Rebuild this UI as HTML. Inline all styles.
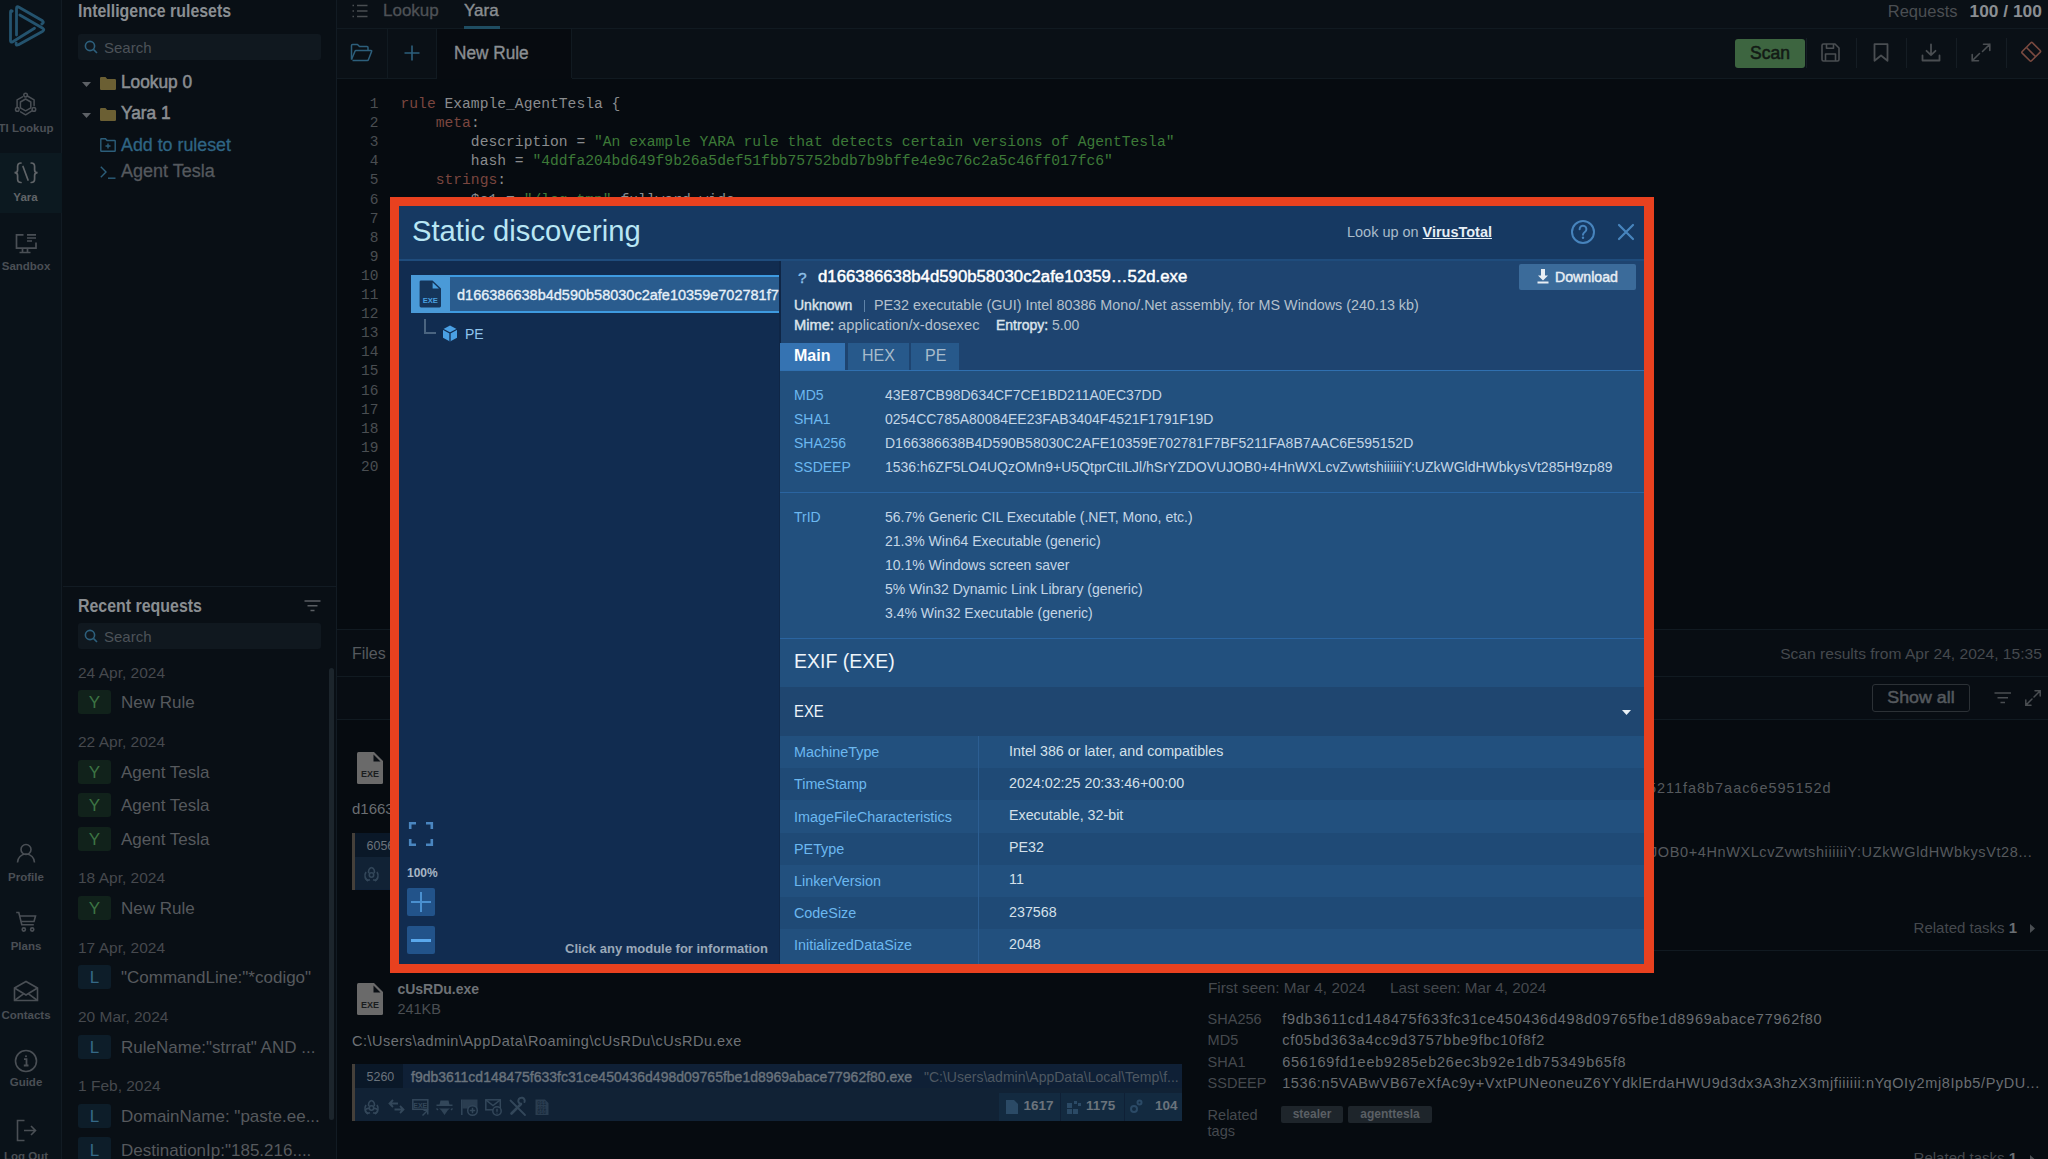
<!DOCTYPE html>
<html><head><meta charset="utf-8">
<style>
*{margin:0;padding:0;box-sizing:border-box}
html,body{width:2048px;height:1159px;overflow:hidden;background:#060b10;font-family:"Liberation Sans",sans-serif}
.a{position:absolute}
.t{position:absolute;white-space:nowrap}
svg{position:absolute;overflow:visible}
.nl{position:absolute;left:0;width:62px;text-align:center;font-size:12px;color:#6a6f74;font-weight:bold;line-height:14px}
.srch{position:absolute;left:15px;width:243px;height:26px;background:#111922;border-radius:3px}
.srch span{position:absolute;left:26px;top:5px;font-size:14px;color:#52585e}
.dt{position:absolute;left:15px;font-size:14px;color:#5c6166;line-height:16px}
.bd{position:absolute;left:15px;width:32px;height:24px;border-radius:3px;font-size:16px;line-height:24px;text-align:center}
.bY{background:#0f2017;color:#3e7a45}
.bL{background:#0d1d29;color:#3b6b89}
.it{position:absolute;left:58px;font-size:17px;color:#6a6f74;line-height:20px}
.code{position:absolute;left:400px;font-family:"Liberation Mono",monospace;font-size:15px;line-height:19px;color:#8f9498;white-space:pre}
.ln{position:absolute;left:340px;width:38px;text-align:right;font-family:"Liberation Mono",monospace;font-size:14px;color:#4b5055;line-height:19px}
.kw{color:#7d4337}
.st{color:#3f7a3a}
.hk{left:14px;font-size:14px;line-height:16px;color:#6cb8f0}
.hv{left:105px;font-size:14px;line-height:16px;color:#c4d6e6}
.tk{left:14px;font-size:14px;line-height:18px;color:#6cb8f0}
.tv{left:229px;font-size:14px;line-height:18px;color:#d4e0ea}
</style></head>
<body>

<div class="a" style="left:0px;top:0px;width:62px;height:1159px;background:#0a1219;"></div>
<div class="a" style="left:61px;top:0px;width:1px;height:1159px;background:#121b23;"></div>
<svg style="left:0;top:0" width="62" height="62" viewBox="0 0 62 62" fill="none" stroke="#24536e" stroke-width="2.8" stroke-linecap="round" stroke-linejoin="round"><path d="M12.2 11.2Q10.5 9.8 10.5 12.2V40.5Q10.5 43 12.8 41.8L34.5 28.2"/><path d="M16.5 35V8.5Q16.5 5.8 19 7.2L42.5 20.8Q44.5 22.3 41.8 24"/><path d="M19.8 15L42.8 28.3Q44.8 29.8 42.8 31.2L18.5 44.8Q15.5 46 16.2 43.2"/></svg>
<div class="a" style="left:0px;top:153px;width:62px;height:60px;background:#0c1920;"></div>
<svg style="left:0;top:85px" width="62" height="40" viewBox="0 85 62 40" fill="none" stroke="#4a4f55" stroke-width="1.5" stroke-linecap="round" stroke-linejoin="round"><path d="M25.6 99L30.8 102V107.8L25.6 110.8L20.4 107.8V102Z"/><path d="M27.4 96L34.1 99.9V105.6"/><path d="M32.3 110.6L25.6 114.8L20.6 111.9"/><path d="M17.1 107.4V99.9L22.5 96.9"/><circle cx="25.6" cy="95.1" r="1.8"/><circle cx="17.3" cy="109.4" r="1.8"/><circle cx="33.9" cy="109.4" r="1.8"/></svg>
<div class="t" style="left:-124px;width:300px;text-align:center;top:121.02px;font-size:11.5px;line-height:15px;color:#4a4f55;font-weight:bold">TI Lookup</div>
<svg style="left:0;top:150px" width="62" height="40" viewBox="0 150 62 40" fill="none" stroke="#606468" stroke-width="1.7" stroke-linecap="round"><path d="M21 163Q17.6 163 17.6 166.5V170Q17.6 172.7 14.5 172.7Q17.6 172.7 17.6 175.4V179Q17.6 182.5 21 182.5"/><path d="M31.2 163Q34.6 163 34.6 166.5V170Q34.6 172.7 37.6 172.7Q34.6 172.7 34.6 175.4V179Q34.6 182.5 31.2 182.5"/><path d="M23 166.5L28 180"/></svg>
<div class="t" style="left:-124.5px;width:300px;text-align:center;top:189.92px;font-size:11.5px;line-height:15px;color:#606468;font-weight:bold">Yara</div>
<svg style="left:14px;top:232px" width="24" height="24" viewBox="0 0 24 24" fill="none" stroke="#4a4f55" stroke-width="1.7"><path d="M9.5 2.8H2.5V16.2H22V10.5"/><path d="M13 2.8H22M13 6H22M13 9H18"/><path d="M8.5 16.2V20.5M13.5 16.2V20.5M5.5 20.5H16.5"/></svg>
<div class="t" style="left:-124px;width:300px;text-align:center;top:259.02px;font-size:11.5px;line-height:15px;color:#4a4f55;font-weight:bold">Sandbox</div>
<svg style="left:14px;top:840px" width="24" height="24" viewBox="0 0 24 24" fill="none" stroke="#4a4f55" stroke-width="1.6"><circle cx="12" cy="9.5" r="5"/><path d="M3.5 22.5A8.5 8.5 0 0 1 20.5 22.5"/></svg>
<div class="t" style="left:-124px;width:300px;text-align:center;top:869.52px;font-size:11.5px;line-height:15px;color:#4a4f55;font-weight:bold">Profile</div>
<svg style="left:14px;top:910px" width="24" height="24" viewBox="0 0 24 24" fill="none" stroke="#4a4f55" stroke-width="1.6"><path d="M2.2 2.5H4.8L7.8 14.8H19.8"/><path d="M5.5 6H21.5L20 11.5H7.2"/><circle cx="9.8" cy="19.5" r="1.6"/><circle cx="18.2" cy="19.5" r="1.6"/></svg>
<div class="t" style="left:-124px;width:300px;text-align:center;top:938.52px;font-size:11.5px;line-height:15px;color:#4a4f55;font-weight:bold">Plans</div>
<svg style="left:13px;top:979px" width="26" height="24" viewBox="0 0 26 24" fill="none" stroke="#4a4f55" stroke-width="1.6"><path d="M1.5 9L13 2.5L24.5 9V21.5H1.5Z"/><path d="M1.5 9L13 16L24.5 9M1.5 21.5L10.5 14.8M24.5 21.5L15.5 14.8"/></svg>
<div class="t" style="left:-124px;width:300px;text-align:center;top:1008.02px;font-size:11.5px;line-height:15px;color:#4a4f55;font-weight:bold">Contacts</div>
<svg style="left:14px;top:1049px" width="24" height="24" viewBox="0 0 24 24" fill="none" stroke="#4a4f55" stroke-width="1.6"><circle cx="12" cy="12" r="10.5"/><path d="M10 10.2H12.5V16.5M9.8 16.5H14.5" stroke-width="1.8"/><circle cx="12" cy="7.2" r="1" fill="#4a4f55" stroke="none"/></svg>
<div class="t" style="left:-124px;width:300px;text-align:center;top:1074.52px;font-size:11.5px;line-height:15px;color:#4a4f55;font-weight:bold">Guide</div>
<svg style="left:14px;top:1118px" width="24" height="24" viewBox="0 0 24 24" fill="none" stroke="#4a4f55" stroke-width="1.6"><path d="M10.5 2.5H3.5V22.5H10.5"/><path d="M10 12.5H21.5M17 8L21.5 12.5L17 17"/></svg>
<div class="t" style="left:-124px;width:300px;text-align:center;top:1148.52px;font-size:11.5px;line-height:15px;color:#4a4f55;font-weight:bold">Log Out</div>
<div class="a" style="left:62px;top:0px;width:274px;height:1159px;background:#090f15;"></div>
<div class="a" style="left:336px;top:0px;width:1px;height:1159px;background:#121b23;"></div>
<div class="t" id="s_ir" style="left:78px;top:0.44px;font-size:17.5px;line-height:22px;color:#8a8e92;font-weight:bold;transform:scaleX(0.91);transform-origin:left">Intelligence rulesets</div>
<div class="a" style="left:78px;top:34px;width:243px;height:26px;background:#10181f;border-radius:3px"></div>
<svg style="left:84px;top:40px" width="14" height="14" viewBox="0 0 14 14" fill="none" stroke="#2d5f7c" stroke-width="1.6"><circle cx="6" cy="6" r="4.6"/><path d="M9.4 9.4L13 13"/></svg>
<div class="t" style="left:104px;top:38.05px;font-size:15px;line-height:19px;color:#4c5258;">Search</div>
<svg style="left:82px;top:81.75px" width="9" height="5" viewBox="0 0 9 5"><path d="M0 0H9L4.5 5Z" fill="#5d6166"/></svg>
<svg style="left:100px;top:76.75px" width="16" height="13" viewBox="0 0 16 13"><path d="M0 1.2Q0 0 1.2 0H5.5L7.2 2H14.8Q16 2 16 3.2V11.8Q16 13 14.8 13H1.2Q0 13 0 11.8Z" fill="#6b5f33"/></svg>
<div class="t" id="tree_Look" style="left:121px;top:71.01px;font-size:18px;line-height:23px;color:#8a8e92;-webkit-text-stroke:0.55px #8a8e92;transform:scaleX(0.96);transform-origin:left">Lookup 0</div>
<svg style="left:82px;top:113px" width="9" height="5" viewBox="0 0 9 5"><path d="M0 0H9L4.5 5Z" fill="#5d6166"/></svg>
<svg style="left:100px;top:108px" width="16" height="13" viewBox="0 0 16 13"><path d="M0 1.2Q0 0 1.2 0H5.5L7.2 2H14.8Q16 2 16 3.2V11.8Q16 13 14.8 13H1.2Q0 13 0 11.8Z" fill="#6b5f33"/></svg>
<div class="t" id="tree_Yara" style="left:121px;top:102.26px;font-size:18px;line-height:23px;color:#8a8e92;-webkit-text-stroke:0.55px #8a8e92;transform:scaleX(0.96);transform-origin:left">Yara 1</div>
<svg style="left:100px;top:138px" width="16" height="14" viewBox="0 0 16 14" fill="none" stroke="#2c5e7a" stroke-width="1.4"><path d="M0.8 1.2Q0.8 0.7 1.3 0.7H5.5L7 2.5H14.7Q15.2 2.5 15.2 3V12.8Q15.2 13.3 14.7 13.3H1.3Q0.8 13.3 0.8 12.8Z"/><path d="M8 5.5V10.5M5.5 8H10.5"/></svg>
<div class="t" id="s_add" style="left:121px;top:133.51px;font-size:18px;line-height:23px;color:#2f6584;-webkit-text-stroke:0.3px #2f6584;transform:scaleX(0.99);transform-origin:left">Add to ruleset</div>
<svg style="left:100px;top:166px" width="16" height="13" viewBox="0 0 16 13" fill="none" stroke="#2c5e7a" stroke-width="1.4"><path d="M0.8 0.8L6 6L0.8 11.2"/><path d="M8 12.2H15.5"/></svg>
<div class="t" id="s_at" style="left:121px;top:159.76px;font-size:18px;line-height:23px;color:#55595e;-webkit-text-stroke:0.3px #55595e">Agent Tesla</div>
<div class="a" style="left:63px;top:586px;width:273px;height:1px;background:#121b23;"></div>
<div class="t" id="s_rr" style="left:78px;top:594.69px;font-size:17.5px;line-height:22px;color:#8a8e92;font-weight:bold;transform:scaleX(0.91);transform-origin:left">Recent requests</div>
<svg style="left:304px;top:600px" width="17" height="12" viewBox="0 0 17 12" fill="none" stroke="#5a5e63" stroke-width="1.5"><path d="M0.5 1H16.5M3.5 5.8H13.5M6.5 10.5H10.5"/></svg>
<div class="a" style="left:78px;top:623px;width:243px;height:26px;background:#10181f;border-radius:3px"></div>
<svg style="left:84px;top:629px" width="14" height="14" viewBox="0 0 14 14" fill="none" stroke="#2d5f7c" stroke-width="1.6"><circle cx="6" cy="6" r="4.6"/><path d="M9.4 9.4L13 13"/></svg>
<div class="t" style="left:104px;top:627.05px;font-size:15px;line-height:19px;color:#4c5258;">Search</div>
<div class="a" style="left:329px;top:668px;width:5px;height:452px;background:#1c252c;border-radius:2.5px"></div>
<div class="t" style="left:78px;top:662.88px;font-size:15.5px;line-height:20px;color:#46494e;">24 Apr, 2024</div>
<div class="a" style="left:78px;top:690px;width:33px;height:24px;background:#11221b;border-radius:3px"></div>
<div class="t" style="left:-55.5px;width:300px;text-align:center;top:692.11px;font-size:17px;line-height:22px;color:#3c7443;">Y</div>
<div class="t" style="left:121px;top:692.11px;font-size:17px;line-height:22px;color:#56595d;">New Rule</div>
<div class="t" style="left:78px;top:732.13px;font-size:15.5px;line-height:20px;color:#46494e;">22 Apr, 2024</div>
<div class="a" style="left:78px;top:759.5px;width:33px;height:24px;background:#11221b;border-radius:3px"></div>
<div class="t" style="left:-55.5px;width:300px;text-align:center;top:761.61px;font-size:17px;line-height:22px;color:#3c7443;">Y</div>
<div class="t" style="left:121px;top:761.61px;font-size:17px;line-height:22px;color:#56595d;">Agent Tesla</div>
<div class="a" style="left:78px;top:793.25px;width:33px;height:24px;background:#11221b;border-radius:3px"></div>
<div class="t" style="left:-55.5px;width:300px;text-align:center;top:795.36px;font-size:17px;line-height:22px;color:#3c7443;">Y</div>
<div class="t" style="left:121px;top:795.36px;font-size:17px;line-height:22px;color:#56595d;">Agent Tesla</div>
<div class="a" style="left:78px;top:826.5px;width:33px;height:24px;background:#11221b;border-radius:3px"></div>
<div class="t" style="left:-55.5px;width:300px;text-align:center;top:828.61px;font-size:17px;line-height:22px;color:#3c7443;">Y</div>
<div class="t" style="left:121px;top:828.61px;font-size:17px;line-height:22px;color:#56595d;">Agent Tesla</div>
<div class="t" style="left:78px;top:867.83px;font-size:15.5px;line-height:20px;color:#46494e;">18 Apr, 2024</div>
<div class="a" style="left:78px;top:896.2px;width:33px;height:24px;background:#11221b;border-radius:3px"></div>
<div class="t" style="left:-55.5px;width:300px;text-align:center;top:898.31px;font-size:17px;line-height:22px;color:#3c7443;">Y</div>
<div class="t" style="left:121px;top:898.31px;font-size:17px;line-height:22px;color:#56595d;">New Rule</div>
<div class="t" style="left:78px;top:937.53px;font-size:15.5px;line-height:20px;color:#46494e;">17 Apr, 2024</div>
<div class="a" style="left:78px;top:965.3px;width:33px;height:24px;background:#0d1d29;border-radius:3px"></div>
<div class="t" style="left:-55.5px;width:300px;text-align:center;top:967.41px;font-size:17px;line-height:22px;color:#356987;">L</div>
<div class="t" style="left:121px;top:967.41px;font-size:17px;line-height:22px;color:#56595d;">"CommandLine:"*codigo"</div>
<div class="t" style="left:78px;top:1006.63px;font-size:15.5px;line-height:20px;color:#46494e;">20 Mar, 2024</div>
<div class="a" style="left:78px;top:1034.5px;width:33px;height:24px;background:#0d1d29;border-radius:3px"></div>
<div class="t" style="left:-55.5px;width:300px;text-align:center;top:1036.61px;font-size:17px;line-height:22px;color:#356987;">L</div>
<div class="t" style="left:121px;top:1036.61px;font-size:17px;line-height:22px;color:#56595d;">RuleName:"strrat" AND ...</div>
<div class="t" style="left:78px;top:1076.03px;font-size:15.5px;line-height:20px;color:#46494e;">1 Feb, 2024</div>
<div class="a" style="left:78px;top:1103.9px;width:33px;height:24px;background:#0d1d29;border-radius:3px"></div>
<div class="t" style="left:-55.5px;width:300px;text-align:center;top:1106.01px;font-size:17px;line-height:22px;color:#356987;">L</div>
<div class="t" style="left:121px;top:1106.01px;font-size:17px;line-height:22px;color:#56595d;">DomainName: "paste.ee...</div>
<div class="a" style="left:78px;top:1137.4px;width:33px;height:24px;background:#0d1d29;border-radius:3px"></div>
<div class="t" style="left:-55.5px;width:300px;text-align:center;top:1139.51px;font-size:17px;line-height:22px;color:#356987;">L</div>
<div class="t" style="left:121px;top:1139.51px;font-size:17px;line-height:22px;color:#56595d;">DestinationIp:"185.216....</div>
<div class="a" style="left:337px;top:0px;width:1711px;height:78px;background:#0a1016;"></div>
<div class="a" style="left:337px;top:28px;width:1711px;height:1px;background:#111a21;"></div>
<svg style="left:352px;top:4px" width="16" height="14" viewBox="0 0 16 14" fill="none" stroke="#4a4e52" stroke-width="1.4"><path d="M5 1.5H15.5M5 7H15.5M5 12.5H15.5"/><path d="M0.5 1.5H2M0.5 7H2M0.5 12.5H2"/></svg>
<div class="t" id="m_lookup" style="left:383px;top:0.31px;font-size:17px;line-height:22px;color:#4e5257;-webkit-text-stroke:0.3px #4e5257">Lookup</div>
<div class="t" id="m_yara" style="left:464px;top:0.31px;font-size:17px;line-height:22px;color:#8a8e92;-webkit-text-stroke:0.4px #8a8e92">Yara</div>
<div class="a" style="left:464px;top:26px;width:36px;height:3px;background:#1f4d62;"></div>
<div class="t" id="m_req" style="right:90.5px;top:0.58px;font-size:16.5px;line-height:21px;color:#4a4e52;">Requests</div>
<div class="t" id="m_100" style="right:6px;top:0.58px;font-size:16.5px;line-height:21px;color:#8a8e92;font-weight:bold;transform:scaleX(1.05);transform-origin:right">100 / 100</div>
<div class="a" style="left:337px;top:78px;width:100px;height:1px;background:#111a21;"></div>
<div class="a" style="left:572px;top:78px;width:1476px;height:1px;background:#111a21;"></div>
<div class="a" style="left:387px;top:29px;width:1px;height:49px;background:#111a21;"></div>
<div class="a" style="left:436px;top:29px;width:1px;height:49px;background:#111a21;"></div>
<div class="a" style="left:571px;top:29px;width:1px;height:49px;background:#111a21;"></div>
<div class="a" style="left:437px;top:29px;width:134px;height:50px;background:#070b10;"></div>
<svg style="left:350px;top:43px" width="23" height="19" viewBox="0 0 23 19" fill="none" stroke="#2d5f7c" stroke-width="1.5" stroke-linejoin="round"><path d="M1.5 16.5V2.5Q1.5 1.5 2.5 1.5H7.5L9.5 3.5H17Q18 3.5 18 4.5V7"/><path d="M1.5 16.5L5 8.2Q5.3 7.5 6 7.5H21Q22 7.5 21.6 8.4L18.5 16.5Q18.2 17.5 17.3 17.5H2.5"/></svg>
<svg style="left:404px;top:45px" width="16" height="16" viewBox="0 0 16 16" fill="none" stroke="#2d5f7c" stroke-width="1.6"><path d="M8 0.5V15.5M0.5 8H15.5"/></svg>
<div class="t" id="m_newrule" style="left:454.4px;top:41.56px;font-size:18px;line-height:23px;color:#8a8e92;-webkit-text-stroke:0.4px #8a8e92;transform:scaleX(0.956);transform-origin:left">New Rule</div>
<div class="a" style="left:1735px;top:39px;width:70px;height:29px;background:#3d6540;border-radius:3px"></div>
<div class="t" id="m_scan" style="left:1620px;width:300px;text-align:center;top:41.94px;font-size:17.5px;line-height:22px;color:#131a15;-webkit-text-stroke:0.55px #131a15">Scan</div>
<div class="a" style="left:1806px;top:38px;width:1px;height:30px;background:#151d24;"></div>
<div class="a" style="left:1856px;top:38px;width:1px;height:30px;background:#151d24;"></div>
<div class="a" style="left:1906px;top:38px;width:1px;height:30px;background:#151d24;"></div>
<div class="a" style="left:1956px;top:38px;width:1px;height:30px;background:#151d24;"></div>
<div class="a" style="left:2006px;top:38px;width:1px;height:30px;background:#151d24;"></div>
<svg style="left:1821px;top:43px" width="19" height="19" viewBox="0 0 19 19" fill="none" stroke="#4a4e52" stroke-width="1.6" stroke-linejoin="round"><path d="M2.5 1H14L18 5V16.5Q18 18 16.5 18H2.5Q1 18 1 16.5V2.5Q1 1 2.5 1Z"/><path d="M5.5 1V5.2H12.5V1M4.5 18V11H14.5V18"/></svg>
<svg style="left:1873px;top:43px" width="16" height="19" viewBox="0 0 16 19" fill="none" stroke="#4a4e52" stroke-width="1.8" stroke-linejoin="round"><path d="M1.5 1.2H14.5V17.8L8 12.5L1.5 17.8Z"/></svg>
<svg style="left:1921px;top:43px" width="20" height="19" viewBox="0 0 20 19" fill="none" stroke="#4a4e52" stroke-width="1.8" stroke-linecap="round" stroke-linejoin="round"><path d="M10 1.5V12M5.5 7.8L10 12.2L14.5 7.8"/><path d="M1.5 12.5V17.5H18.5V12.5"/></svg>
<svg style="left:1971px;top:43px" width="20" height="19" viewBox="0 0 20 19" fill="none" stroke="#4a4e52" stroke-width="1.6" stroke-linecap="round"><path d="M12.5 1.2H18.8V7.5M18.8 1.2L11.5 8.5M7.5 17.8H1.2V11.5M1.2 17.8L8.5 10.5"/></svg>
<svg style="left:2020px;top:41px" width="22" height="22" viewBox="0 0 22 22" fill="none" stroke="#7a4a40" stroke-width="1.6" stroke-linejoin="round"><path d="M12.5 1.8L20.2 9.5Q21 10.3 20.2 11.1L11.5 19.8Q10.7 20.6 9.9 19.8L2.2 12.1Q1.4 11.3 2.2 10.5L10.9 1.8Q11.7 1 12.5 1.8Z"/><path d="M6.5 6.5L15.5 15.5"/></svg>
<div class="t" style="right:1669.5px;top:95.08px;font-size:14.5px;line-height:19px;color:#4a4e52;font-family:'Liberation Mono',monospace">1</div>
<div class="t" style="right:1669.5px;top:114.18px;font-size:14.5px;line-height:19px;color:#4a4e52;font-family:'Liberation Mono',monospace">2</div>
<div class="t" style="right:1669.5px;top:133.28px;font-size:14.5px;line-height:19px;color:#4a4e52;font-family:'Liberation Mono',monospace">3</div>
<div class="t" style="right:1669.5px;top:152.38px;font-size:14.5px;line-height:19px;color:#4a4e52;font-family:'Liberation Mono',monospace">4</div>
<div class="t" style="right:1669.5px;top:171.48px;font-size:14.5px;line-height:19px;color:#4a4e52;font-family:'Liberation Mono',monospace">5</div>
<div class="t" style="right:1669.5px;top:190.58px;font-size:14.5px;line-height:19px;color:#4a4e52;font-family:'Liberation Mono',monospace">6</div>
<div class="t" style="right:1669.5px;top:209.68px;font-size:14.5px;line-height:19px;color:#4a4e52;font-family:'Liberation Mono',monospace">7</div>
<div class="t" style="right:1669.5px;top:228.78px;font-size:14.5px;line-height:19px;color:#4a4e52;font-family:'Liberation Mono',monospace">8</div>
<div class="t" style="right:1669.5px;top:247.88px;font-size:14.5px;line-height:19px;color:#4a4e52;font-family:'Liberation Mono',monospace">9</div>
<div class="t" style="right:1669.5px;top:266.98px;font-size:14.5px;line-height:19px;color:#4a4e52;font-family:'Liberation Mono',monospace">10</div>
<div class="t" style="right:1669.5px;top:286.08px;font-size:14.5px;line-height:19px;color:#4a4e52;font-family:'Liberation Mono',monospace">11</div>
<div class="t" style="right:1669.5px;top:305.18px;font-size:14.5px;line-height:19px;color:#4a4e52;font-family:'Liberation Mono',monospace">12</div>
<div class="t" style="right:1669.5px;top:324.28px;font-size:14.5px;line-height:19px;color:#4a4e52;font-family:'Liberation Mono',monospace">13</div>
<div class="t" style="right:1669.5px;top:343.38px;font-size:14.5px;line-height:19px;color:#4a4e52;font-family:'Liberation Mono',monospace">14</div>
<div class="t" style="right:1669.5px;top:362.48px;font-size:14.5px;line-height:19px;color:#4a4e52;font-family:'Liberation Mono',monospace">15</div>
<div class="t" style="right:1669.5px;top:381.58px;font-size:14.5px;line-height:19px;color:#4a4e52;font-family:'Liberation Mono',monospace">16</div>
<div class="t" style="right:1669.5px;top:400.68px;font-size:14.5px;line-height:19px;color:#4a4e52;font-family:'Liberation Mono',monospace">17</div>
<div class="t" style="right:1669.5px;top:419.78px;font-size:14.5px;line-height:19px;color:#4a4e52;font-family:'Liberation Mono',monospace">18</div>
<div class="t" style="right:1669.5px;top:438.88px;font-size:14.5px;line-height:19px;color:#4a4e52;font-family:'Liberation Mono',monospace">19</div>
<div class="t" style="right:1669.5px;top:457.98px;font-size:14.5px;line-height:19px;color:#4a4e52;font-family:'Liberation Mono',monospace">20</div>
<div class="t" style="left:400.5px;top:95.02px;font-size:14.67px;line-height:19px;color:#8a8c8e;font-family:'Liberation Mono',monospace;white-space:pre"><span style="color:#7a463f">rule</span> Example_AgentTesla {</div>
<div class="t" style="left:400.5px;top:114.12px;font-size:14.67px;line-height:19px;color:#8a8c8e;font-family:'Liberation Mono',monospace;white-space:pre">    <span style="color:#7a463f">meta</span>:</div>
<div class="t" style="left:400.5px;top:133.22px;font-size:14.67px;line-height:19px;color:#8a8c8e;font-family:'Liberation Mono',monospace;white-space:pre">        description = <span style="color:#3d7a38">"An example YARA rule that detects certain versions of AgentTesla"</span></div>
<div class="t" style="left:400.5px;top:152.32px;font-size:14.67px;line-height:19px;color:#8a8c8e;font-family:'Liberation Mono',monospace;white-space:pre">        hash = <span style="color:#3d7a38">"4ddfa204bd649f9b26a5def51fbb75752bdb7b9bffe4e9c76c2a5c46ff017fc6"</span></div>
<div class="t" style="left:400.5px;top:171.42px;font-size:14.67px;line-height:19px;color:#8a8c8e;font-family:'Liberation Mono',monospace;white-space:pre">    <span style="color:#7a463f">strings</span>:</div>
<div class="t" style="left:400.5px;top:190.52px;font-size:14.67px;line-height:19px;color:#8a8c8e;font-family:'Liberation Mono',monospace;white-space:pre">        $s1 = <span style="color:#3d7a38">"/log.tmp"</span> fullword wide</div>
<div class="a" style="left:337px;top:629px;width:1711px;height:1px;background:#111a21;"></div>
<div class="a" style="left:337px;top:630px;width:1711px;height:90px;background:#080d13;"></div>
<div class="a" style="left:337px;top:676px;width:1711px;height:1px;background:#111a21;"></div>
<div class="a" style="left:337px;top:719px;width:1711px;height:1px;background:#111a21;"></div>
<div class="t" id="m_files" style="left:352.3px;top:643.11px;font-size:17px;line-height:22px;color:#55595e;;transform:scaleX(0.94);transform-origin:left">Files</div>
<div class="t" id="m_scanres" style="right:6.5px;top:644.10px;font-size:15px;line-height:19px;color:#45494e;;transform:scaleX(1.039);transform-origin:right">Scan results from Apr 24, 2024, 15:35</div>
<div class="a" style="left:1872px;top:684px;width:98px;height:28px;background:transparent;border:1.5px solid #2c3136;border-radius:3px"></div>
<div class="t" id="m_showall" style="left:1771px;width:300px;text-align:center;top:686.91px;font-size:17px;line-height:22px;color:#55595e;-webkit-text-stroke:0.5px #55595e;transform:scaleX(1.05);transform-origin:center">Show all</div>
<svg style="left:1994px;top:692px" width="18" height="12" viewBox="0 0 18 12" fill="none" stroke="#4a4e52" stroke-width="1.5"><path d="M0.5 1H17M3.5 5.8H14M6.5 10.5H11"/></svg>
<svg style="left:2025px;top:690px" width="16" height="16" viewBox="0 0 16 16" fill="none" stroke="#4a4e52" stroke-width="1.5" stroke-linecap="round"><path d="M10 0.8H15.2V6M15.2 0.8L9 7M6 15.2H0.8V10M0.8 15.2L7 9"/></svg>
<svg style="left:357px;top:752px" width="26" height="32" viewBox="0 0 26 32"><path d="M1.5 0H17L26 9V30.5Q26 32 24.5 32H1.5Q0 32 0 30.5V1.5Q0 0 1.5 0Z" fill="#6a6a6a"/><path d="M16.5 2.5V9.5H23.5Z" fill="#0a0f14"/><text x="13" y="25" font-size="9" font-weight="bold" text-anchor="middle" fill="#1a1d20" font-family="Liberation Sans">EXE</text></svg>
<div class="t" style="left:352px;top:799.30px;font-size:15px;line-height:19px;color:#6a6e72;">d166386638b4d590b58030c2afe10359e702781f7bf5211fa8b7aac6e595152d</div>
<div class="a" style="left:352px;top:833px;width:830px;height:57px;background:#0f2036;border-left:3px solid #45403a"></div>
<div class="a" style="left:355px;top:833px;width:48px;height:24px;background:#0a1828;"></div>
<div class="t" style="left:366.5px;top:837.67px;font-size:12.5px;line-height:16px;color:#6a737c;">6056</div>
<div class="a" style="left:355px;top:857px;width:35px;height:32px;background:#112235;"></div>
<svg style="left:363px;top:866px" width="17" height="17" viewBox="0 0 17 17"><g fill="none" stroke="#33475a" stroke-width="1.6"><circle cx="8.5" cy="9" r="2.2"/><path d="M8.5 1.5A4 4 0 0 0 6 7.2M8.5 1.5A4 4 0 0 1 11 7.2M2 11.5A4 4 0 0 0 7 13.8M15 11.5A4 4 0 0 1 10 13.8"/><path d="M3 6A6.5 6.5 0 0 0 5 15M14 6A6.5 6.5 0 0 1 12 15"/></g></svg>
<div class="t" id="m_p1" style="left:1648px;top:778.88px;font-size:14.5px;line-height:19px;color:#55595d;;letter-spacing:0.96px">5211fa8b7aac6e595152d</div>
<div class="t" id="m_p2" style="left:1650px;top:843.38px;font-size:14.5px;line-height:19px;color:#55595d;;letter-spacing:0.6px">JOB0+4HnWXLcvZvwtshiiiiiiY:UZkWGldHWbkysVt28...</div>
<div class="t" id="m_rt1" style="right:31px;top:917.90px;font-size:15px;line-height:19px;color:#45494e;">Related tasks <b style="color:#6a6e72">1</b></div>
<svg style="left:2030px;top:924px" width="5" height="9" viewBox="0 0 5 9"><path d="M0 0L5 4.5L0 9Z" fill="#4a4e52"/></svg>
<div class="a" style="left:1654px;top:950px;width:394px;height:1px;background:#111a21;"></div>
<svg style="left:357px;top:983px" width="26" height="32" viewBox="0 0 26 32"><path d="M1.5 0H17L26 9V30.5Q26 32 24.5 32H1.5Q0 32 0 30.5V1.5Q0 0 1.5 0Z" fill="#6a6a6a"/><path d="M16.5 2.5V9.5H23.5Z" fill="#0a0f14"/><text x="13" y="25" font-size="9" font-weight="bold" text-anchor="middle" fill="#1a1d20" font-family="Liberation Sans">EXE</text></svg>
<div class="t" id="m_cus" style="left:397.4px;top:979.75px;font-size:14px;line-height:18px;color:#6e7276;font-weight:bold">cUsRDu.exe</div>
<div class="t" id="m_241" style="left:397.4px;top:1000.18px;font-size:14.5px;line-height:19px;color:#4a4e52;">241KB</div>
<div class="t" id="m_path" style="left:352px;top:1031.78px;font-size:14.5px;line-height:19px;color:#6e7276;;letter-spacing:0.5px">C:\Users\admin\AppData\Roaming\cUsRDu\cUsRDu.exe</div>
<div class="a" style="left:352px;top:1064px;width:830px;height:57px;background:#0f2036;border-left:3px solid #45403a"></div>
<div class="a" style="left:355px;top:1064px;width:48px;height:24px;background:#0a1828;"></div>
<div class="a" style="left:355px;top:1088px;width:827px;height:33px;background:#112235;"></div>
<div class="a" style="left:999px;top:1093px;width:183px;height:28px;background:#132a40;"></div>
<div class="a" style="left:1060px;top:1093px;width:1px;height:28px;background:#0f2036;"></div>
<div class="a" style="left:1124px;top:1093px;width:1px;height:28px;background:#0f2036;"></div>
<div class="t" id="m_5260" style="left:366.5px;top:1068.67px;font-size:12.5px;line-height:16px;color:#6a737c;">5260</div>
<div class="t" id="m_phash" style="left:411px;top:1068.15px;font-size:14px;line-height:18px;color:#6a737c;-webkit-text-stroke:0.4px #6a737c">f9db3611cd148475f633fc31ce450436d498d09765fbe1d8969abace77962f80.exe</div>
<div class="t" id="m_ppath" style="left:924px;top:1068.15px;font-size:14px;line-height:18px;color:#4e5862;">"C:\Users\admin\AppData\Local\Temp\f...</div>
<svg style="left:363px;top:1099px" width="17" height="17" viewBox="0 0 17 17"><g fill="none" stroke="#33475a" stroke-width="1.6"><circle cx="8.5" cy="9" r="2.2"/><path d="M8.5 1.5A4 4 0 0 0 6 7.2M8.5 1.5A4 4 0 0 1 11 7.2M2 11.5A4 4 0 0 0 7 13.8M2.2 11.2A4 4 0 0 1 6.2 9.5M15 11.5A4 4 0 0 1 10 13.8M14.8 11.2A4 4 0 0 0 10.8 9.5"/><path d="M3 6A6.5 6.5 0 0 0 5 15M14 6A6.5 6.5 0 0 1 12 15"/></g></svg>
<svg style="left:388px;top:1099px" width="17" height="17" viewBox="0 0 17 17"><g fill="none" stroke="#33475a" stroke-width="1.8"><path d="M1.5 4.5H10M5 1L1.5 4.5L5 8"/><path d="M15.5 10.5H6.5M12 7L15.5 10.5L12 14"/></g></svg>
<svg style="left:412px;top:1099px" width="17" height="17" viewBox="0 0 17 17"><g><rect x="0.8" y="0.8" width="15" height="9.5" fill="none" stroke="#33475a" stroke-width="1.5"/><text x="8.3" y="8.6" font-size="7" text-anchor="middle" fill="#33475a" font-family="Liberation Sans" font-weight="bold">EXE</text><path d="M10 16L14 12H11.5V10.5H16.5V15.5H15V13L11 17Z" fill="#33475a"/></g></svg>
<svg style="left:436px;top:1099px" width="17" height="17" viewBox="0 0 17 17"><g fill="#33475a"><path d="M4.5 1.5H12.5L13.5 5.5H16.5V7H0.5V5.5H3.5Z"/><path d="M3 9.5H14L12 11L8.5 16L5 11Z" opacity=".9"/><path d="M2 11L0.5 9.5M15 11L16.5 9.5" stroke="#33475a" stroke-width="1.4"/></g></svg>
<svg style="left:461px;top:1099px" width="17" height="17" viewBox="0 0 17 17"><g><path d="M0.8 0.5V16" stroke="#33475a" stroke-width="1.5"/><rect x="1.5" y="0.5" width="15" height="9" fill="#33475a" opacity=".75"/><circle cx="11.5" cy="11.5" r="4.8" fill="#112235" stroke="#33475a" stroke-width="1.5"/><path d="M11.5 8.8V14.2M8.8 11.5H14.2" stroke="#33475a" stroke-width="1.5"/></g></svg>
<svg style="left:485px;top:1099px" width="17" height="17" viewBox="0 0 17 17"><g fill="none" stroke="#33475a" stroke-width="1.5"><rect x="0.8" y="0.8" width="14.5" height="10"/><path d="M0.8 0.8L8 6.5L15.3 0.8"/><circle cx="12" cy="12" r="4.2" fill="#112235"/><path d="M12 9.8V12.8M12 13.8V14.5"/></g></svg>
<svg style="left:509px;top:1099px" width="17" height="17" viewBox="0 0 17 17"><g stroke="#33475a" stroke-linecap="round"><path d="M2.5 14.5L12 5" stroke-width="2.6"/><path d="M12 5A3.2 3.2 0 1 1 15.5 3" fill="none" stroke-width="2"/><path d="M1.5 1.5L4.5 4.5L16 16" stroke-width="1.8"/></g></svg>
<svg style="left:535px;top:1099px" width="17" height="17" viewBox="0 0 17 17"><g><path d="M0.5 0.5H10L13.5 4V16H0.5Z" fill="#33475a" opacity=".75"/><text x="6.8" y="6" font-size="5" text-anchor="middle" fill="#112235" font-family="Liberation Mono">011</text><text x="6.8" y="10.5" font-size="5" text-anchor="middle" fill="#112235" font-family="Liberation Mono">101</text><text x="6.8" y="15" font-size="5" text-anchor="middle" fill="#112235" font-family="Liberation Mono">010</text></g></svg>
<svg style="left:1006px;top:1100px" width="12" height="14" viewBox="0 0 12 14"><path d="M0 0H8L12 4V14H0Z" fill="#2b4a66"/></svg>
<div class="t" id="m_1617" style="left:1023.5px;top:1097.42px;font-size:13.5px;line-height:17px;color:#6a737c;font-weight:bold">1617</div>
<svg style="left:1067px;top:1099px" width="14" height="15" viewBox="0 0 14 15" fill="#2b4a66"><rect x="0" y="4" width="5" height="5"/><rect x="0" y="10" width="5" height="5"/><rect x="6" y="10" width="5" height="5"/><rect x="7" y="2" width="3" height="3"/><rect x="11" y="4" width="3" height="3"/></svg>
<div class="t" id="m_1175" style="left:1086px;top:1097.42px;font-size:13.5px;line-height:17px;color:#6a737c;font-weight:bold">1175</div>
<svg style="left:1129px;top:1099px" width="13" height="15" viewBox="0 0 13 15" fill="none" stroke="#2b4a66" stroke-width="2"><circle cx="5" cy="10" r="3"/><circle cx="10.5" cy="3.5" r="2"/></svg>
<div class="t" id="m_104" style="left:1155px;top:1097.42px;font-size:13.5px;line-height:17px;color:#6a737c;font-weight:bold">104</div>
<div class="t" id="m_first" style="left:1207.6px;top:978.98px;font-size:14.5px;line-height:19px;color:#45494e;;transform:scaleX(1.056);transform-origin:left">First seen: Mar 4, 2024</div>
<div class="t" id="m_last" style="left:1389.8px;top:978.98px;font-size:14.5px;line-height:19px;color:#45494e;;transform:scaleX(1.053);transform-origin:left">Last seen: Mar 4, 2024</div>
<div class="t" style="left:1207.6px;top:1010.48px;font-size:14.5px;line-height:19px;color:#45494e;">SHA256</div>
<div class="t" id="m_vSHA256" style="left:1282.2px;top:1010.48px;font-size:14.5px;line-height:19px;color:#6a6e72;;letter-spacing:0.76px">f9db3611cd148475f633fc31ce450436d498d09765fbe1d8969abace77962f80</div>
<div class="t" style="left:1207.6px;top:1031.38px;font-size:14.5px;line-height:19px;color:#45494e;">MD5</div>
<div class="t" id="m_vMD5" style="left:1282.2px;top:1031.38px;font-size:14.5px;line-height:19px;color:#6a6e72;;letter-spacing:0.76px">cf05bd363a4cc9d3757bbe9fbc10f8f2</div>
<div class="t" style="left:1207.6px;top:1053.18px;font-size:14.5px;line-height:19px;color:#45494e;">SHA1</div>
<div class="t" id="m_vSHA1" style="left:1282.2px;top:1053.18px;font-size:14.5px;line-height:19px;color:#6a6e72;;letter-spacing:0.76px">656169fd1eeb9285eb26ec3b92e1db75349b65f8</div>
<div class="t" style="left:1207.6px;top:1074.48px;font-size:14.5px;line-height:19px;color:#45494e;">SSDEEP</div>
<div class="t" id="m_vSSDEEP" style="left:1282.2px;top:1074.48px;font-size:14.5px;line-height:19px;color:#6a6e72;;letter-spacing:0.6px">1536:n5VABwVB67eXfAc9y+VxtPUNeoneuZ6YYdklErdaHWU9d3dx3A3hzX3mjfiiiiii:nYqOIy2mj8Ipb5/PyDU...</div>
<div class="t" style="left:1207.6px;top:1105.98px;font-size:14.5px;line-height:19px;color:#45494e;">Related</div>
<div class="t" style="left:1207.6px;top:1122.28px;font-size:14.5px;line-height:19px;color:#45494e;">tags</div>
<div class="a" style="left:1281px;top:1106px;width:62px;height:17px;background:#1e252b;border-radius:2px"></div>
<div class="t" id="m_tag1" style="left:1162px;width:300px;text-align:center;top:1106.84px;font-size:12px;line-height:15px;color:#5a5f64;font-weight:bold">stealer</div>
<div class="a" style="left:1348px;top:1106px;width:84px;height:17px;background:#1e252b;border-radius:2px"></div>
<div class="t" id="m_tag2" style="left:1240px;width:300px;text-align:center;top:1106.84px;font-size:12px;line-height:15px;color:#5a5f64;font-weight:bold">agenttesla</div>
<div class="t" style="right:31px;top:1148.30px;font-size:15px;line-height:19px;color:#45494e;">Related tasks <b style="color:#6a6e72">1</b></div>
<svg style="left:2030px;top:1155px" width="5" height="9" viewBox="0 0 5 9"><path d="M0 0L5 4.5L0 9Z" fill="#4a4e52"/></svg>
<div class="a" style="left:390px;top:197px;width:1264px;height:776px;background:#e8411f;"></div>
<div class="a" style="left:399px;top:206px;width:1245px;height:758px;background:#112c50;"></div>
<div class="a" style="left:399px;top:206px;width:1245px;height:53px;background:#163962;"></div>
<div class="a" style="left:399px;top:259px;width:1245px;height:2px;background:#1f4c7c;"></div>
<div class="t" id="title" style="left:412px;top:213.08px;font-size:29.2px;line-height:37px;color:#b8e6f4;">Static discovering</div>
<div class="t" id="lookup" style="left:1347px;top:222.65px;font-size:14px;line-height:18px;color:#a9bccb;;transform:scaleX(1.033);transform-origin:left">Look up on <span style="color:#e6eef5;text-decoration:underline;font-weight:bold">VirusTotal</span></div>
<svg style="left:1571px;top:220px" width="24" height="24" viewBox="0 0 24 24"><circle cx="12" cy="12" r="11" fill="none" stroke="#4784bd" stroke-width="2"/><path d="M8.6 9.2a3.4 3.4 0 1 1 5.2 2.8c-1.2.8-1.8 1.4-1.8 2.8" fill="none" stroke="#4784bd" stroke-width="2" stroke-linecap="round"/><circle cx="12" cy="17.8" r="1.2" fill="#4784bd"/></svg>
<svg style="left:1618px;top:224px" width="16" height="16" viewBox="0 0 16 16"><path d="M1 1L15 15M15 1L1 15" stroke="#4784bd" stroke-width="2.2" stroke-linecap="round"/></svg>
<div class="a" style="left:411px;top:275px;width:368px;height:38px;background:#2a5c8e;border-top:2px solid #3e9ae0;border-bottom:2px solid #3e9ae0"></div>
<div class="a" style="left:411px;top:275px;width:39px;height:38px;background:#4a9ad8;"></div>
<svg style="left:419px;top:280px" width="23" height="28" viewBox="0 0 23 28"><path d="M2 0.6H13.5L22 8.5V26Q22 27.4 20.6 27.4H2Q0.6 27.4 0.6 26V2Q0.6 0.6 2 0.6Z" fill="#15355a"/><path d="M13.6 2.6L20 8.4H13.6Z" fill="#4aa0e0"/><text x="11.3" y="22.5" font-size="7.6" font-weight="bold" text-anchor="middle" fill="#4aa0e0" font-family="Liberation Sans">EXE</text></svg>
<div class="a" style="left:450px;top:275px;width:329px;height:38px;overflow:hidden">
<div class="t" id="treetxt" style="left:7px;top:11.08px;font-size:14.5px;line-height:19px;color:#e6f0f8;-webkit-text-stroke:0.35px #e6f0f8">d166386638b4d590b58030c2afe10359e702781f7bf5211fa8b7aac6e595152d.exe</div>
</div>
<div class="a" style="left:424px;top:319px;width:2px;height:15px;background:#4a6480;"></div>
<div class="a" style="left:424px;top:332px;width:12px;height:2px;background:#4a6480;"></div>
<svg style="left:442px;top:325px" width="16" height="17" viewBox="0 0 16 17"><path d="M8 0.5L15 4.2V12.8L8 16.5L1 12.8V4.2Z" fill="#4aa0e4"/><path d="M1 4.2L8 8L15 4.2M8 8V16.5" fill="none" stroke="#112c50" stroke-width="1.3"/></svg>
<div class="t" id="pe" style="left:465px;top:324.65px;font-size:14px;line-height:18px;color:#8fc6ee;">PE</div>
<svg style="left:409px;top:822px" width="24" height="24" viewBox="0 0 24 24"><path d="M1.2 7V1.2H7M17 1.2H22.8V7M22.8 17V22.8H17M7 22.8H1.2V17" fill="none" stroke="#4a86c0" stroke-width="2.6"/></svg>
<div class="t" id="pct" style="left:407px;top:866.34px;font-size:12px;line-height:15px;color:#a8b6c4;font-weight:bold">100%</div>
<div class="a" style="left:407px;top:888px;width:28px;height:28px;background:#22538a;border-radius:2px"></div>
<div class="a" style="left:411px;top:901px;width:20px;height:2px;background:#4a90d0;"></div>
<div class="a" style="left:420px;top:892px;width:2px;height:20px;background:#4a90d0;"></div>
<div class="a" style="left:407px;top:926px;width:28px;height:28px;background:#22538a;border-radius:2px"></div>
<div class="a" style="left:411px;top:939px;width:20px;height:3px;background:#5aa8ec;"></div>
<div class="t" id="click" style="right:1280px;top:940.00px;font-size:13px;line-height:17px;color:#9aa8b8;font-weight:bold">Click any module for information</div>
<div class="a" style="left:779px;top:261px;width:865px;height:703px;background:#1e4470;"></div>
<div class="a" style="left:779px;top:261px;width:2px;height:703px;background:#0f2646;"></div>
<div class="t" style="left:798px;top:268.13px;font-size:15.5px;line-height:20px;color:#8ec0e8;-webkit-text-stroke:0.4px #8ec0e8">?</div>
<div class="t" id="fname" style="left:818px;top:267.46px;font-size:16px;line-height:20px;color:#ffffff;-webkit-text-stroke:0.45px #fff;transform:scaleX(1.048);transform-origin:left">d166386638b4d590b58030c2afe10359…52d.exe</div>
<div class="a" style="left:1519px;top:264px;width:117px;height:26px;background:#3b6b9a;border-radius:2px"></div>
<svg style="left:1537px;top:269px" width="12" height="15" viewBox="0 0 12 15"><path d="M4 0H8V6.5H11L6 11.5L1 6.5H4Z" fill="#e8eef4"/><rect x="0.5" y="12.5" width="11" height="2" fill="#e8eef4"/></svg>
<div class="t" id="dl" style="left:1555px;top:268.48px;font-size:14.5px;line-height:19px;color:#e8eef4;-webkit-text-stroke:0.45px #e8eef4;transform:scaleX(0.977);transform-origin:left">Download</div>
<div class="t" id="unk" style="left:794px;top:296.35px;font-size:14px;line-height:18px;color:#dce4ec;-webkit-text-stroke:0.4px #dce4ec">Unknown</div>
<div class="a" style="left:864px;top:300px;width:1px;height:12px;background:#5f83a8;"></div>
<div class="t" id="pe32" style="left:874px;top:296.35px;font-size:14px;line-height:18px;color:#b4c0cc;;transform:scaleX(1.024);transform-origin:left">PE32 executable (GUI) Intel 80386 Mono/.Net assembly, for MS Windows (240.13 kb)</div>
<div class="t" id="mime" style="left:794px;top:315.85px;font-size:14px;line-height:18px;color:#b4c0cc;;transform:scaleX(1.05);transform-origin:left"><span style="color:#dce4ec;-webkit-text-stroke:0.4px #dce4ec">Mime:</span> application/x-dosexec</div>
<div class="t" id="entropy" style="left:996px;top:315.85px;font-size:14px;line-height:18px;color:#b4c0cc;"><span style="color:#dce4ec;-webkit-text-stroke:0.4px #dce4ec">Entropy:</span> 5.00</div>
<div class="a" style="left:780px;top:343px;width:65px;height:27px;background:#3573b2;"></div>
<div class="t" id="tmain" style="left:794px;top:346.26px;font-size:16px;line-height:20px;color:#ffffff;font-weight:bold">Main</div>
<div class="a" style="left:848px;top:343px;width:61px;height:27px;background:#27598b;"></div>
<div class="t" id="thex" style="left:862px;top:346.26px;font-size:16px;line-height:20px;color:#a8bccc;">HEX</div>
<div class="a" style="left:911px;top:343px;width:48px;height:27px;background:#27598b;"></div>
<div class="t" id="tpe" style="left:925px;top:346.26px;font-size:16px;line-height:20px;color:#a8bccc;">PE</div>
<div class="a" style="left:780px;top:370px;width:864px;height:1px;background:#3070b0;"></div>
<div class="a" style="left:780px;top:371px;width:864px;height:121px;background:#22507e;"></div>
<div class="a" style="left:780px;top:492px;width:864px;height:1px;background:#2a64a0;"></div>
<div class="a" style="left:780px;top:493px;width:864px;height:145px;background:#22507e;"></div>
<div class="a" style="left:780px;top:638px;width:864px;height:1px;background:#2a64a0;"></div>
<div class="a" style="left:780px;top:639px;width:864px;height:48px;background:#22507e;"></div>
<div class="t" id="hk0" style="left:794px;top:386.15px;font-size:14px;line-height:18px;color:#6cb8f0;">MD5</div>
<div class="t" id="hv0" style="left:885px;top:386.15px;font-size:14px;line-height:18px;color:#c4d6e6;">43E87CB98D634CF7CE1BD211A0EC37DD</div>
<div class="t" id="hk1" style="left:794px;top:410.15px;font-size:14px;line-height:18px;color:#6cb8f0;">SHA1</div>
<div class="t" id="hv1" style="left:885px;top:410.15px;font-size:14px;line-height:18px;color:#c4d6e6;">0254CC785A80084EE23FAB3404F4521F1791F19D</div>
<div class="t" id="hk2" style="left:794px;top:434.15px;font-size:14px;line-height:18px;color:#6cb8f0;">SHA256</div>
<div class="t" id="hv2" style="left:885px;top:434.15px;font-size:14px;line-height:18px;color:#c4d6e6;">D166386638B4D590B58030C2AFE10359E702781F7BF5211FA8B7AAC6E595152D</div>
<div class="t" id="hk3" style="left:794px;top:458.15px;font-size:14px;line-height:18px;color:#6cb8f0;">SSDEEP</div>
<div class="t" id="hv3" style="left:885px;top:458.15px;font-size:14px;line-height:18px;color:#c4d6e6;">1536:h6ZF5LO4UQzOMn9+U5QtprCtILJl/hSrYZDOVUJOB0+4HnWXLcvZvwtshiiiiiiY:UZkWGldHWbkysVt285H9zp89</div>
<div class="t" id="trid" style="left:794px;top:507.95px;font-size:14px;line-height:18px;color:#6cb8f0;">TrID</div>
<div class="t" id="tr0" style="left:885px;top:507.95px;font-size:14px;line-height:18px;color:#c4d6e6;">56.7% Generic CIL Executable (.NET, Mono, etc.)</div>
<div class="t" id="tr1" style="left:885px;top:531.95px;font-size:14px;line-height:18px;color:#c4d6e6;">21.3% Win64 Executable (generic)</div>
<div class="t" id="tr2" style="left:885px;top:555.95px;font-size:14px;line-height:18px;color:#c4d6e6;">10.1% Windows screen saver</div>
<div class="t" id="tr3" style="left:885px;top:579.95px;font-size:14px;line-height:18px;color:#c4d6e6;">5% Win32 Dynamic Link Library (generic)</div>
<div class="t" id="tr4" style="left:885px;top:603.95px;font-size:14px;line-height:18px;color:#c4d6e6;">3.4% Win32 Executable (generic)</div>
<div class="t" id="exif" style="left:794px;top:648.20px;font-size:20.5px;line-height:26px;color:#eef4fa;;transform:scaleX(0.95);transform-origin:left">EXIF (EXE)</div>
<div class="a" style="left:780px;top:687px;width:864px;height:49px;background:#1f4670;"></div>
<div class="t" id="exe" style="left:794px;top:700.98px;font-size:16.5px;line-height:21px;color:#eef4fa;;transform:scaleX(0.9);transform-origin:left">EXE</div>
<svg style="left:1622px;top:710px" width="9" height="5" viewBox="0 0 9 5"><path d="M0 0H9L4.5 5Z" fill="#e8f0f6"/></svg>
<div class="a" style="left:780px;top:736.00px;width:864px;height:32.60px;background:#22507e"></div>
<div class="a" style="left:780px;top:768.20px;width:864px;height:32.60px;background:#1f4a76"></div>
<div class="a" style="left:780px;top:800.40px;width:864px;height:32.60px;background:#22507e"></div>
<div class="a" style="left:780px;top:832.60px;width:864px;height:32.60px;background:#1f4a76"></div>
<div class="a" style="left:780px;top:864.80px;width:864px;height:32.60px;background:#22507e"></div>
<div class="a" style="left:780px;top:897.00px;width:864px;height:32.60px;background:#1f4a76"></div>
<div class="a" style="left:780px;top:929.20px;width:864px;height:34.80px;background:#22507e"></div>
<div class="t" id="tk0" style="left:794px;top:743.25px;font-size:14px;line-height:18px;color:#6cb8f0;;transform:scaleX(1.025);transform-origin:left">MachineType</div>
<div class="t" id="tv0" style="left:1009px;top:741.65px;font-size:14px;line-height:18px;color:#d4e0ea;;transform:scaleX(1.02);transform-origin:left">Intel 386 or later, and compatibles</div>
<div class="t" id="tk1" style="left:794px;top:775.45px;font-size:14px;line-height:18px;color:#6cb8f0;;transform:scaleX(1.025);transform-origin:left">TimeStamp</div>
<div class="t" id="tv1" style="left:1009px;top:773.85px;font-size:14px;line-height:18px;color:#d4e0ea;;transform:scaleX(1.02);transform-origin:left">2024:02:25 20:33:46+00:00</div>
<div class="t" id="tk2" style="left:794px;top:807.65px;font-size:14px;line-height:18px;color:#6cb8f0;;transform:scaleX(1.025);transform-origin:left">ImageFileCharacteristics</div>
<div class="t" id="tv2" style="left:1009px;top:806.05px;font-size:14px;line-height:18px;color:#d4e0ea;;transform:scaleX(1.02);transform-origin:left">Executable, 32-bit</div>
<div class="t" id="tk3" style="left:794px;top:839.85px;font-size:14px;line-height:18px;color:#6cb8f0;;transform:scaleX(1.025);transform-origin:left">PEType</div>
<div class="t" id="tv3" style="left:1009px;top:838.25px;font-size:14px;line-height:18px;color:#d4e0ea;;transform:scaleX(1.02);transform-origin:left">PE32</div>
<div class="t" id="tk4" style="left:794px;top:872.05px;font-size:14px;line-height:18px;color:#6cb8f0;;transform:scaleX(1.025);transform-origin:left">LinkerVersion</div>
<div class="t" id="tv4" style="left:1009px;top:870.45px;font-size:14px;line-height:18px;color:#d4e0ea;;transform:scaleX(1.02);transform-origin:left">11</div>
<div class="t" id="tk5" style="left:794px;top:904.25px;font-size:14px;line-height:18px;color:#6cb8f0;;transform:scaleX(1.025);transform-origin:left">CodeSize</div>
<div class="t" id="tv5" style="left:1009px;top:902.65px;font-size:14px;line-height:18px;color:#d4e0ea;;transform:scaleX(1.02);transform-origin:left">237568</div>
<div class="t" id="tk6" style="left:794px;top:936.45px;font-size:14px;line-height:18px;color:#6cb8f0;;transform:scaleX(1.025);transform-origin:left">InitializedDataSize</div>
<div class="t" id="tv6" style="left:1009px;top:934.85px;font-size:14px;line-height:18px;color:#d4e0ea;;transform:scaleX(1.02);transform-origin:left">2048</div>
<div class="a" style="left:978px;top:736px;width:1px;height:228px;background:#2c5e92;"></div>
</body></html>
